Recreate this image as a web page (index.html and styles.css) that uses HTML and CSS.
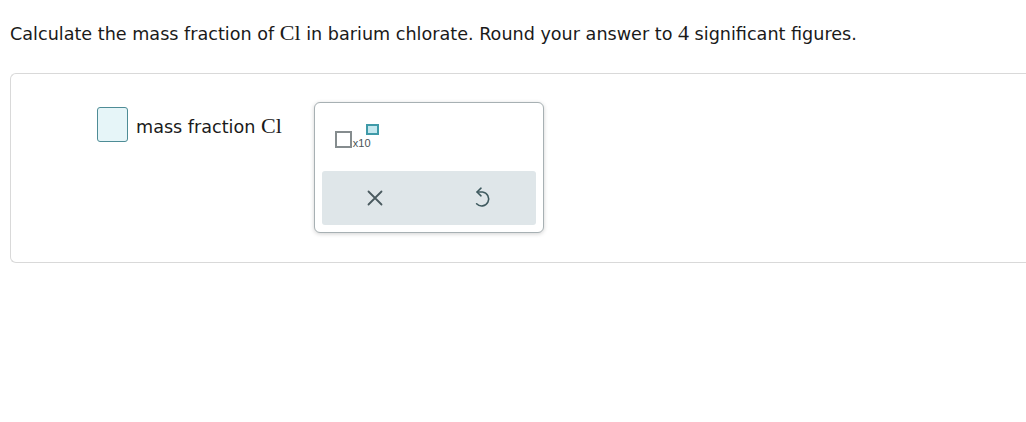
FILE: index.html
```html
<!DOCTYPE html>
<html>
<head>
<meta charset="utf-8">
<link rel="stylesheet" href="styles.css">
</head>
<body>
<p class="question">Calculate the mass fraction of <span class="math">Cl</span> in barium chlorate. Round your answer to <span class="math">4</span> significant figures.</p>
<div class="card">
  <div class="answer-row">
    <div class="answer">
      <div class="input-box"></div>
      <span class="label">mass fraction <span class="math">Cl</span></span>
    </div>
    <div class="palette">
      <div class="sci">
        <span class="base-box"></span>
        <span class="x10">x10</span>
        <span class="exp-box"></span>
      </div>
      <div class="actions">
        <button class="btn" aria-label="clear">
          <svg width="16" height="16" viewBox="0 0 16 16"><path d="M1.5 1.5 L14.5 14.5 M14.5 1.5 L1.5 14.5" stroke="#4a5a5f" stroke-width="1.8" fill="none" stroke-linecap="round"/></svg>
        </button>
        <button class="btn" aria-label="undo">
          <svg width="17" height="22" viewBox="0 0 17 22"><path d="M7 1.2 L3 5 L7 8.8" stroke="#3f5a5f" stroke-width="1.6" fill="none" stroke-linecap="round" stroke-linejoin="round"/><path d="M3.2 5 H8.5 A7 7 0 1 1 2.6 16.8" stroke="#3f5a5f" stroke-width="1.6" fill="none" stroke-linecap="round"/></svg>
        </button>
      </div>
    </div>
  </div>
</div>
</body>
</html>
```
FILE: styles.css
```css
html, body {
  margin: 0;
  padding: 0;
  background: #ffffff;
}
body {
  padding: 0 0 0 10px;
  font-family: "DejaVu Sans", Verdana, sans-serif;
  color: #1a1a1a;
  overflow: hidden;
}
.question {
  margin: 0;
  padding-top: 21px;
  font-size: 17.6px;
  line-height: 24px;
  height: 52px;
}
.math {
  font-family: "Liberation Serif", "Times New Roman", serif;
  font-size: 22px;
}
.card {
  width: 1040px;
  border: 1px solid #d9d9d9;
  border-right: none;
  border-radius: 6px 0 0 6px;
  box-sizing: border-box;
  height: 190px;
  padding: 28px 0 0 86px;
}
.answer-row {
  display: flex;
  align-items: flex-start;
  gap: 32px;
}
.answer {
  display: flex;
  align-items: center;
  gap: 8px;
  padding-top: 5px;
}
.input-box {
  width: 29px;
  height: 33px;
  border: 1px solid #4e8c96;
  background: #e6f5f8;
  border-radius: 3px;
}
.label {
  font-size: 17.6px;
  position: relative;
  top: 1px;
}
.palette {
  width: 230px;
  height: 131px;
  box-sizing: border-box;
  border: 1px solid #a7b0b3;
  border-radius: 6px;
  background: #fff;
  box-shadow: 0 1px 4px rgba(0,0,0,0.18);
  padding: 21px 7px 0 7px;
}
.sci {
  display: flex;
  align-items: flex-end;
  height: 24px;
  padding-left: 13px;
}
.base-box {
  width: 13px;
  height: 13px;
  border: 2px solid #858c8e;
  display: block;
}
.x10 {
  font-family: "Liberation Sans", Arial, sans-serif;
  font-size: 11px;
  color: #4a5458;
  line-height: 10px;
  margin-left: 1px;
}
.exp-box {
  width: 9px;
  height: 7px;
  border: 2px solid #3f9aa8;
  background: #c4e8ef;
  align-self: flex-start;
  margin-left: -5px;
}
.actions {
  margin-top: 23px;
  height: 54px;
  background: #dfe6e9;
  border-radius: 3px;
  display: flex;
}
.btn {
  flex: 1;
  border: none;
  background: transparent;
  display: flex;
  align-items: center;
  justify-content: center;
  padding: 0;
}
```
